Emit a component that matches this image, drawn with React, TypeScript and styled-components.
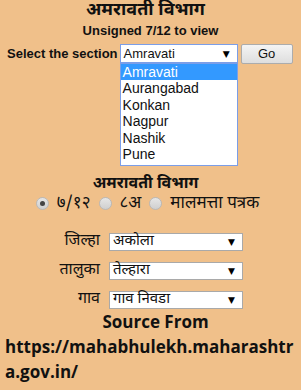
import * as React from 'react';
import styled, { createGlobalStyle } from 'styled-components';

const GlobalStyle = createGlobalStyle`
    html, body {
        margin: 0;
        padding: 0;
        background: #f0c08a;
    }
`;

const DEVA = `"Noto Sans Devanagari", "Lohit Devanagari", "Mangal", "Noto Sans", "Liberation Sans", sans-serif`;

const Page = styled.div`
    width: 301px;
    height: 390px;
    overflow: hidden;
    background: #f0c08a;
    font-family: "Liberation Sans", Arial, sans-serif;
    color: #111;
`;

const Title = styled.div<{ $size: number }>`
    font-family: ${DEVA};
    font-weight: 700;
    font-size: ${(p) => p.$size}px;
    text-align: center;
    line-height: 1.2;
    padding-right: 10px;
`;

const Subtitle = styled.div`
    font-weight: 700;
    font-size: 13px;
    text-align: center;
    line-height: 15px;
    margin-top: 1px;
`;

const SectionRow = styled.div`
    display: flex;
    align-items: center;
    padding-left: 7px;
    margin-top: 6px;
    height: 20px;
`;

const SectionLabel = styled.span`
    font-weight: 700;
    font-size: 13px;
    margin-right: 2px;
`;

const SelectWrap = styled.div`
    position: relative;
`;

const SelectBox = styled.div<{ $w: number; $focus?: boolean; $deva?: boolean }>`
    display: flex;
    flex: none;
    align-items: center;
    justify-content: space-between;
    box-sizing: border-box;
    width: ${(p) => p.$w}px;
    height: ${(p) => (p.$focus ? 19 : 18)}px;
    padding: 0 7px 0 3px;
    background: #fff;
    border: 1px solid ${(p) => (p.$focus ? '#7b9ee8' : '#a9a9a9')};
    font-family: ${(p) => (p.$deva ? DEVA : '"Liberation Sans", Arial, sans-serif')};
    font-size: ${(p) => (p.$deva ? 15 : 13)}px;
    color: #111;
    white-space: nowrap;
`;

const Arrow = styled.span`
    font-family: "DejaVu Sans", sans-serif;
    font-size: 9px;
    color: #000;
`;

const DropList = styled.ul`
    position: absolute;
    left: 0;
    top: 19px;
    z-index: 2;
    box-sizing: border-box;
    width: 118px;
    margin: 0;
    padding: 0 0 3px;
    list-style: none;
    background: #fff;
    border: 1px solid #7b9ee8;
`;

const DropItem = styled.li<{ $active?: boolean }>`
    height: 16.4px;
    line-height: 16px;
    padding-left: 2px;
    font-size: 14px;
    color: ${(p) => (p.$active ? '#fff' : '#111')};
    background: ${(p) => (p.$active ? '#3399ff' : 'transparent')};
`;

const GoButton = styled.button`
    margin-left: 3px;
    width: 52px;
    height: 20px;
    padding: 0;
    font-family: "Liberation Sans", Arial, sans-serif;
    font-size: 13px;
    color: #111;
    background: linear-gradient(#f4f4f4, #dedede);
    border: 1px solid #acacac;
    border-radius: 2px;
`;

const Spacer = styled.div`
    height: 111px;
`;

const RadioRow = styled.div`
    display: flex;
    align-items: center;
    justify-content: center;
    gap: 8px;
    margin-top: -1px;
    padding-right: 6px;
    font-family: ${DEVA};
    font-size: 17px;
    line-height: 22px;
`;

const RadioItem = styled.label`
    display: flex;
    align-items: center;
    gap: 8px;
`;

const RadioDot = styled.span<{ $checked?: boolean }>`
    position: relative;
    width: 11px;
    height: 11px;
    border-radius: 50%;
    border: 1px solid #b9b9b9;
    background: linear-gradient(#e6e6e6, #cfcfcf);
    &::after {
        content: '';
        display: ${(p) => (p.$checked ? 'block' : 'none')};
        position: absolute;
        left: 3px;
        top: 3px;
        width: 5px;
        height: 5px;
        border-radius: 50%;
        background: #444;
    }
`;

const Form = styled.div`
    display: flex;
    flex-direction: column;
    gap: 11px;
    margin-top: 18px;
`;

const FieldRow = styled.div`
    display: flex;
    align-items: center;
    height: 18px;
`;

const FieldLabel = styled.span`
    flex: none;
    width: 100px;
    margin-right: 9px;
    text-align: right;
    font-family: ${DEVA};
    font-size: 16px;
    line-height: 18px;
`;

const Source = styled.div`
    margin-top: 0;
    padding: 0 5px;
    font-family: "Open Sans", "Liberation Sans", sans-serif;
    font-weight: 700;
    font-size: 17px;
    line-height: 25px;
    word-break: break-all;
`;

const Centered = styled.div`
    text-align: center;
    padding-left: 10px;
`;

const sections = ['Amravati', 'Aurangabad', 'Konkan', 'Nagpur', 'Nashik', 'Pune'];

const fields = [
    { label: 'जिल्हा', value: 'अकोला' },
    { label: 'तालुका', value: 'तेल्हारा' },
    { label: 'गाव', value: 'गाव निवडा' },
];

export default function App() {
    return (
        <Page>
            <GlobalStyle />
            <Title $size={18}>अमरावती विभाग</Title>
            <Subtitle>Unsigned 7/12 to view</Subtitle>
            <SectionRow>
                <SectionLabel>Select the section</SectionLabel>
                <SelectWrap>
                    <SelectBox $w={118} $focus>
                        <span>Amravati</span>
                        <Arrow>▼</Arrow>
                    </SelectBox>
                    <DropList>
                        {sections.map((s, i) => (
                            <DropItem key={s} $active={i === 0}>{s}</DropItem>
                        ))}
                    </DropList>
                </SelectWrap>
                <GoButton>Go</GoButton>
            </SectionRow>
            <Spacer />
            <Title $size={16}>अमरावती विभाग</Title>
            <RadioRow>
                <RadioItem><RadioDot $checked />७/१२</RadioItem>
                <RadioItem><RadioDot />८अ</RadioItem>
                <RadioItem><RadioDot />मालमत्ता पत्रक</RadioItem>
            </RadioRow>
            <Form>
                {fields.map((f) => (
                    <FieldRow key={f.label}>
                        <FieldLabel>{f.label}</FieldLabel>
                        <SelectBox $w={134} $deva>
                            <span>{f.value}</span>
                            <Arrow>▼</Arrow>
                        </SelectBox>
                    </FieldRow>
                ))}
            </Form>
            <Source>
                <Centered>Source From</Centered>
                https://mahabhulekh.maharashtra.gov.in/
            </Source>
        </Page>
    );
}
